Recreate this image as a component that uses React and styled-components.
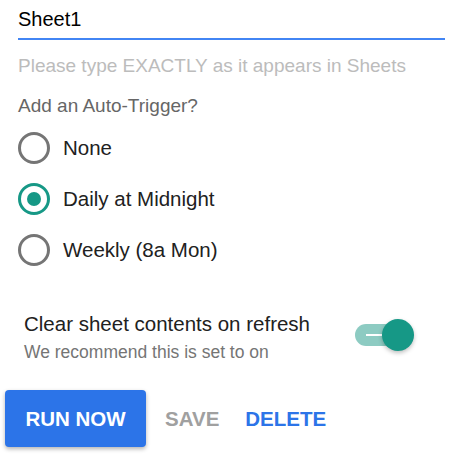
import React, { useState } from "react";
import styled, { createGlobalStyle } from "styled-components";

const GlobalStyle = createGlobalStyle`
  html, body {
    margin: 0;
    padding: 0;
    background: #ffffff;
    font-family: "Liberation Sans", Arial, sans-serif;
  }
`;

const TEAL = "#169886";
const BLUE = "#2c74e8";

const Page = styled.div`
  width: 472px;
  height: 472px;
  overflow: hidden;
  display: flex;
  flex-direction: column;
`;

const Field = styled.div`
  margin: 0 27px 0 18px;
  padding-top: 7px;
`;

const Input = styled.input`
  display: block;
  width: 100%;
  box-sizing: border-box;
  border: none;
  border-bottom: 2px solid #4285f4;
  outline: none;
  padding: 0 0 7px;
  font-family: inherit;
  font-size: 20px;
  line-height: 24px;
  height: 33px;
  color: #000;
  background: transparent;
`;

const Helper = styled.div`
  margin-top: 15px;
  font-size: 19px;
  line-height: 22px;
  color: #bcbcbc;
`;

const GroupLabel = styled.div`
  margin: 18px 0 0 18px;
  font-size: 19px;
  line-height: 22px;
  color: #666666;
`;

const RadioList = styled.div`
  display: flex;
  flex-direction: column;
  gap: 19px;
  margin: 15px 0 0 18px;
`;

const RadioRow = styled.label`
  display: flex;
  align-items: center;
  gap: 13px;
  cursor: pointer;
  font-size: 20.5px;
  color: #212121;
  height: 32px;
`;

const RadioCircle = styled.span`
  width: 32px;
  height: 32px;
  box-sizing: border-box;
  border-radius: 50%;
  border: 3px solid ${(p) => (p.$checked ? TEAL : "#757575")};
  display: flex;
  align-items: center;
  justify-content: center;

  &::after {
    content: "";
    width: 14px;
    height: 14px;
    border-radius: 50%;
    background: ${TEAL};
    display: ${(p) => (p.$checked ? "block" : "none")};
  }
`;

const ToggleRow = styled.div`
  display: flex;
  align-items: flex-start;
  margin: 46px 0 0 24px;
  width: 390px;
`;

const ToggleText = styled.div`
  flex: 1;
`;

const ToggleTitle = styled.div`
  font-size: 20.5px;
  line-height: 24px;
  color: #212121;
`;

const ToggleSub = styled.div`
  margin-top: 6px;
  font-size: 17.5px;
  line-height: 20px;
  color: #757575;
`;

const Switch = styled.button`
  position: relative;
  width: 59px;
  height: 32px;
  border: none;
  padding: 0;
  background: transparent;
  cursor: pointer;
  margin-top: 7px;
`;

const Track = styled.span`
  position: absolute;
  left: 0;
  top: 5px;
  width: 50px;
  height: 22px;
  border-radius: 11px;
  background: ${(p) => (p.$on ? "#8dcbc2" : "#bdbdbd")};

  &::before {
    content: "";
    position: absolute;
    left: 11px;
    top: 10px;
    width: 16px;
    height: 2px;
    background: #ffffff;
  }
`;

const Knob = styled.span`
  position: absolute;
  top: 0;
  left: ${(p) => (p.$on ? "27px" : "0")};
  width: 32px;
  height: 32px;
  border-radius: 50%;
  background: ${(p) => (p.$on ? TEAL : "#f5f5f5")};
  box-shadow: 0 2px 4px rgba(0, 0, 0, 0.25);
`;

const Actions = styled.div`
  display: flex;
  align-items: center;
  margin: 28px 0 0 5px;
`;

const PrimaryButton = styled.button`
  width: 141px;
  height: 57px;
  border: none;
  border-radius: 4px;
  background: ${BLUE};
  color: #ffffff;
  font-family: inherit;
  font-size: 20.5px;
  font-weight: 700;
  box-shadow: 0 2px 4px rgba(0, 0, 0, 0.3);
  cursor: pointer;
`;

const FlatButton = styled.button`
  border: none;
  background: transparent;
  font-family: inherit;
  font-size: 20.5px;
  font-weight: 700;
  color: ${(p) => p.$color};
  padding: 0 13px;
  margin-left: ${(p) => p.$gap || 0}px;
  height: 57px;
  cursor: pointer;
`;

const options = ["None", "Daily at Midnight", "Weekly (8a Mon)"];

export default function App() {
  const [trigger, setTrigger] = useState(1);
  const [clear, setClear] = useState(true);

  return (
    <Page>
      <GlobalStyle />
      <Field>
        <Input defaultValue="Sheet1" />
        <Helper>Please type EXACTLY as it appears in Sheets</Helper>
      </Field>
      <GroupLabel>Add an Auto-Trigger?</GroupLabel>
      <RadioList>
        {options.map((label, i) => (
          <RadioRow key={label} onClick={() => setTrigger(i)}>
            <RadioCircle $checked={trigger === i} />
            {label}
          </RadioRow>
        ))}
      </RadioList>
      <ToggleRow>
        <ToggleText>
          <ToggleTitle>Clear sheet contents on refresh</ToggleTitle>
          <ToggleSub>We recommend this is set to on</ToggleSub>
        </ToggleText>
        <Switch onClick={() => setClear(!clear)}>
          <Track $on={clear} />
          <Knob $on={clear} />
        </Switch>
      </ToggleRow>
      <Actions>
        <PrimaryButton>RUN NOW</PrimaryButton>
        <FlatButton $color="#a0a0a0" $gap={6}>SAVE</FlatButton>
        <FlatButton $color={BLUE}>DELETE</FlatButton>
      </Actions>
    </Page>
  );
}
